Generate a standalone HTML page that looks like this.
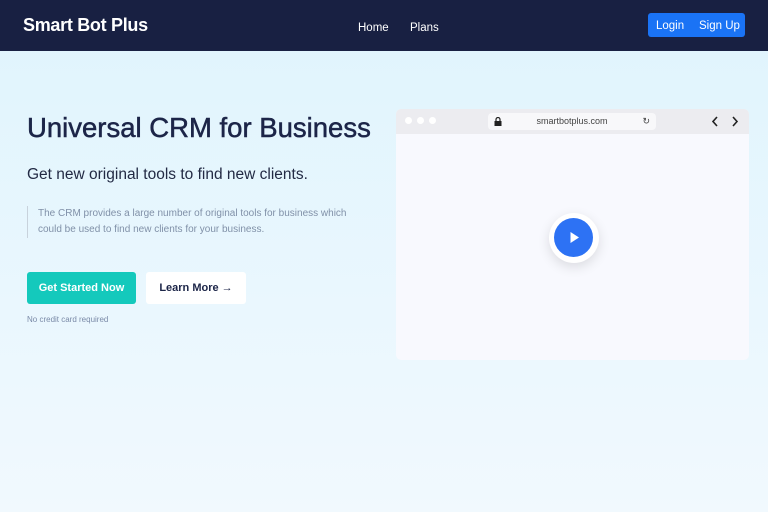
<!DOCTYPE html>
<html><head><style>
*{margin:0;padding:0;box-sizing:border-box}
body{width:768px;height:512px;overflow:hidden;font-family:"Liberation Sans",sans-serif;background:linear-gradient(#dff4fd,#f1f9fe);position:relative}
.nav{position:absolute;top:0;left:0;width:768px;height:51px;background:#182042}
.logo{position:absolute;left:23px;top:15px;color:#fff;font-weight:bold;font-size:18px;letter-spacing:-0.3px}
.nl{position:absolute;top:21px;color:#fff;font-size:11.5px;line-height:14px}
.btn{position:absolute;left:648px;top:13px;width:97px;height:24px;background:#1a73f5;border-radius:3px;color:#fff;font-size:11.5px;line-height:14px}
h1{position:absolute;left:27px;top:112px;font-size:27.5px;color:#1c2548;font-weight:normal;-webkit-text-stroke:0.5px #1c2548}
.sub{position:absolute;left:27px;top:166px;font-size:15.5px;color:#222a44}
.quote{position:absolute;left:27px;top:206px;border-left:1px solid #c8d2dc;padding-left:10px;font-size:10px;line-height:16px;color:#8090a8;width:340px}
.gs{position:absolute;left:27px;top:272px;width:109px;height:32px;background:#14c9bc;border-radius:3px;color:#fff;font-size:11px;font-weight:bold;text-align:center;line-height:32px}
.lm{position:absolute;left:146px;top:272px;width:100px;height:32px;background:#fff;border-radius:3px;color:#1c2548;font-size:11px;font-weight:bold;text-align:center;line-height:32px}
.nc{position:absolute;left:27px;top:315px;font-size:8px;color:#7a8aa8}
.win{position:absolute;left:396px;top:109px;width:353px;height:251px;background:#f8f9fe;border-radius:5px;overflow:hidden}
.bar{height:25px;background:#ececf0;position:relative}
.dot{position:absolute;top:8px;width:7px;height:7px;border-radius:50%;background:#fff}
.url{position:absolute;left:92px;top:4px;width:168px;height:17px;background:#f8f8fa;border-radius:4px;font-size:9px;color:#444;text-align:center;line-height:17px}
.play{position:absolute;left:549px;top:213px;width:50px;height:50px;border-radius:50%;background:#fff;box-shadow:0 4px 12px rgba(0,0,0,.12)}
.play div{position:absolute;left:5px;top:5px;width:39px;height:39px;border-radius:50%;background:#2d72f4}
</style></head><body>
<div class="nav">
<div class="logo">Smart Bot Plus</div>
<div class="nl" style="left:358px">Home</div>
<div class="nl" style="left:410px">Plans</div>
<div class="btn"><span style="position:absolute;left:8px;top:6px">Login</span><span style="position:absolute;left:51px;top:6px">Sign Up</span></div>
</div>
<h1>Universal CRM for Business</h1>
<div class="sub">Get new original tools to find new clients.</div>
<div class="quote">The CRM provides a large number of original tools for business which could be used to find new clients for your business.</div>
<div class="gs">Get Started Now</div>
<div class="lm">Learn More →</div>
<div class="nc">No credit card required</div>
<div class="win"><div class="bar">
<div class="dot" style="left:9px"></div><div class="dot" style="left:21px"></div><div class="dot" style="left:33px"></div>
<div class="url"><svg style="position:absolute;left:6px;top:4px" width="8" height="9"><rect x="0.5" y="4" width="7" height="5" fill="#222"/><path d="M2 4V2.5a2 2 0 0 1 4 0V4" stroke="#222" stroke-width="1.2" fill="none"/></svg>smartbotplus.com<span style="position:absolute;right:6px;top:0">↻</span></div>
<svg style="position:absolute;left:316px;top:7px" width="30" height="11"><path d="M5 1L1 5.5 5 10M21 1l4 4.5L21 10" stroke="#222" stroke-width="1.6" fill="none"/></svg>
</div></div>
<div class="play"><div><svg width="39" height="39"><path d="M16.5 14l8.5 5.5-8.5 5.5z" fill="#fff"/></svg></div></div>
</body></html>
